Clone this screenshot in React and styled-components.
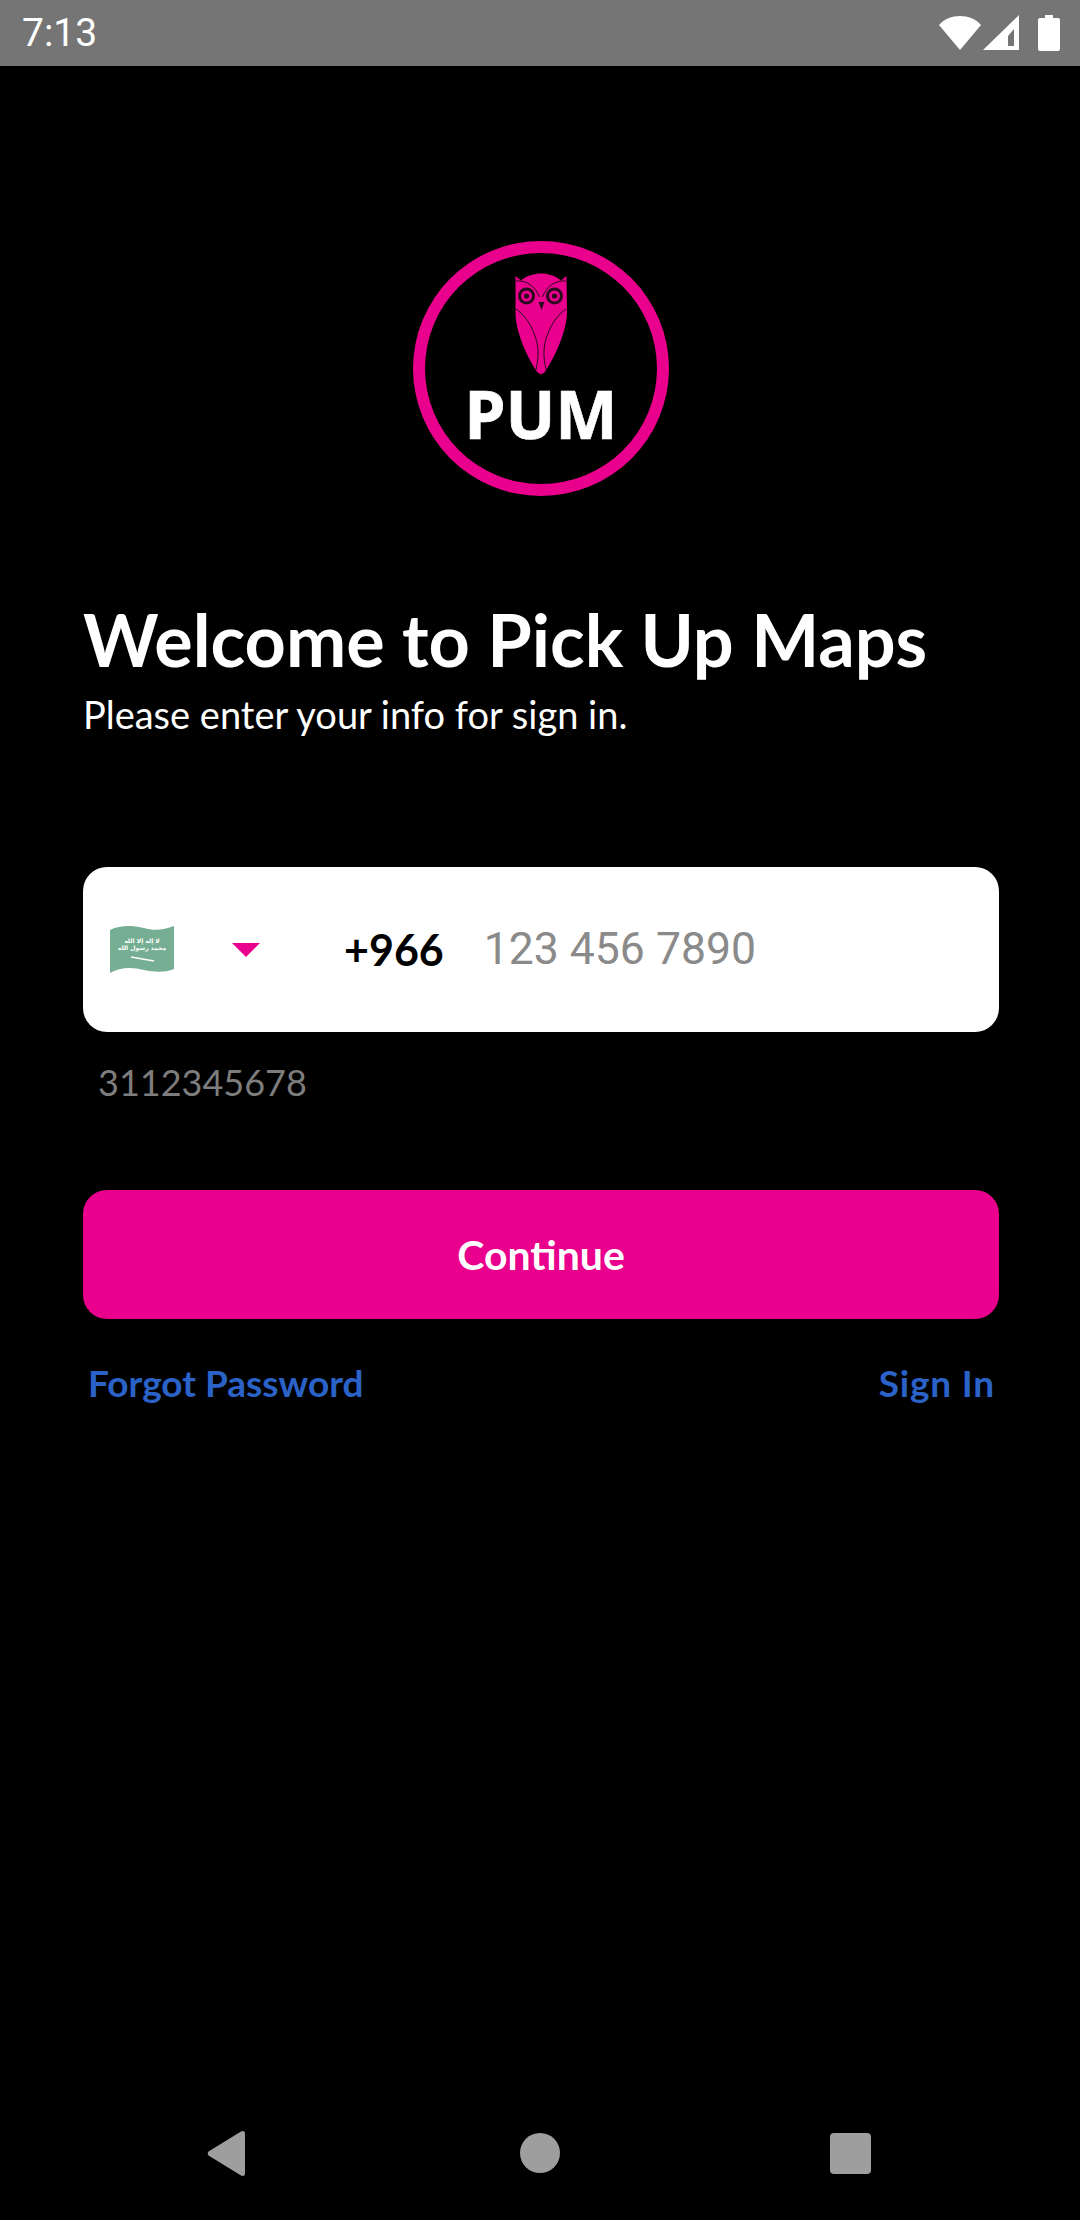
import React from "react";
import styled, { createGlobalStyle } from "styled-components";

const Global = createGlobalStyle`
  html, body { margin: 0; padding: 0; background: #000; }
  * { box-sizing: border-box; }
`;

const UI = `"Lato", "Noto Sans", sans-serif`;

const Screen = styled.div`
  width: 1080px;
  height: 2220px;
  background: #000;
  display: flex;
  flex-direction: column;
  font-family: ${UI};
  overflow: hidden;
`;

const StatusBar = styled.header`
  height: 66px;
  flex: none;
  background: #757575;
  display: flex;
  align-items: center;
  justify-content: space-between;
  padding: 0 20px 0 22px;
`;

const Clock = styled.span`
  font: 400 39px/1 "Roboto", sans-serif;
  color: #fff;
  margin-top: 1px;
`;

const StatusIcons = styled.div`
  display: flex;
  align-items: center;
`;

const SignalIcon = styled.svg`
  width: 38px;
  height: 36px;
  margin-left: 1px;
`;

const BatteryIcon = styled.svg`
  width: 22px;
  height: 36px;
  margin-left: 18px;
`;

const Main = styled.main`
  flex: 1;
  display: flex;
  flex-direction: column;
  padding: 175px 81px 0 83px;
`;

const Logo = styled.div`
  width: 256px;
  height: 255px;
  align-self: center;
  border: 12px solid #e9008c;
  border-radius: 50%;
  display: flex;
  flex-direction: column;
  align-items: center;
  padding-top: 20px;
`;

const LogoMark = styled.span`
  font: 700 66px/1 "Noto Sans", sans-serif;
  color: #fff;
  margin-top: 3px;
  -webkit-text-stroke: 0.6px #fff;
`;

const Title = styled.h1`
  margin: 101px 0 0 0;
  font: 700 72px/84px ${UI};
  letter-spacing: -0.03px;
  color: #fff;
  white-space: nowrap;
`;

const Subtitle = styled.p`
  margin: 10px 0 0 0;
  font: 400 38px/46px ${UI};
  color: #fff;
`;

const PhoneField = styled.div`
  margin-top: 130px;
  height: 165px;
  border-radius: 24px;
  background: #fff;
  display: flex;
  align-items: center;
  padding-left: 27px;
`;

const Caret = styled.span`
  width: 0;
  height: 0;
  margin-left: 58px;
  border-left: 14.5px solid transparent;
  border-right: 14.5px solid transparent;
  border-top: 14px solid #e9008c;
`;

const DialCode = styled.span`
  margin-left: 84px;
  font: 700 43px/1 ${UI};
  color: #000;
`;

const Placeholder = styled.span`
  margin-left: 40px;
  font: 400 44.5px/1 "Roboto", sans-serif;
  color: #8a8a8a;
`;

const HelperNumber = styled.div`
  margin: 27px 0 0 15px;
  font: 400 36px/46px ${UI};
  color: #7d7d7d;
`;

const ContinueButton = styled.button`
  margin-top: 85px;
  height: 129px;
  width: 100%;
  border: 0;
  border-radius: 24px;
  background: #e9008c;
  color: #fff;
  font: 700 41px/1 ${UI};
`;

const LinkRow = styled.div`
  display: flex;
  justify-content: space-between;
  padding: 0 4px 0 5px;
  margin-top: 41px;
`;

const TextLink = styled.a`
  font: 700 37px/46px ${UI};
  letter-spacing: ${(p) => p.$tracking || 0}px;
  color: #2a62c8;
`;

const NavBar = styled.nav`
  height: 132px;
  flex: none;
  display: flex;
  align-items: flex-start;
  padding: 45px 0 0 207px;
`;

const NavBack = styled.svg`
  width: 38px;
  height: 45px;
  margin-top: -2px;
`;

const NavHome = styled.span`
  width: 40px;
  height: 40px;
  margin-left: 275px;
  border-radius: 50%;
  background: #9e9e9e;
`;

const NavRecent = styled.span`
  width: 41px;
  height: 41px;
  margin-left: 270px;
  border-radius: 4px;
  background: #9e9e9e;
`;

const Owl = () => (
  <svg width="54" height="104" viewBox="13 9 54 104" aria-hidden="true">
    <path
      fill="#e9008c"
      d="M14.5 12 L20 16.5 C26 11.5 33 9.5 40 9.5 C47 9.5 54 11.5 60 16.5 L65.5 12 L66 50 C65 70 52 96 44.5 107 C42 111 38 111 35.5 107 C28 96 15 70 14.5 50 Z"
    />
    <g fill="none" stroke="#2a0a1e" strokeWidth="1">
      <path d="M15 17 C24 16 34 21 38.5 33" />
      <path d="M65 17 C56 16 46 21 41.5 33" />
      <path d="M15 45 C26 52 36 70 37 86 C37.5 94 36 100 35 106" />
      <path d="M65 45 C54 52 44 70 43 86 C42.5 94 44 100 45 106" />
      <circle cx="25.5" cy="32" r="7" strokeWidth="3" />
      <circle cx="53.5" cy="32" r="7" strokeWidth="3" />
    </g>
    <circle cx="25.5" cy="32" r="2.6" fill="#2a0a1e" />
    <circle cx="53.5" cy="32" r="2.6" fill="#2a0a1e" />
    <path d="M37.5 38 L43.5 38 L40.5 46 Z" fill="#2a0a1e" />
  </svg>
);

const SaudiFlag = () => (
  <svg width="64" height="47" viewBox="0 0 64 47" aria-hidden="true">
    <path
      fill="#75ae93"
      d="M0 4 C10 -1 22 -1 34 2 C44 5 54 4 64 0 L64 43 C54 47 44 46 34 44 C22 41 10 41 0 47 Z"
    />
    <g fontFamily="DejaVu Sans" fontSize="6" fontWeight="700" fill="#fff" textAnchor="middle">
      <text x="32" y="17">لا إله إلا الله</text>
      <text x="32" y="24">محمد رسول الله</text>
    </g>
    <path d="M21 31 L44 35" stroke="#fff" strokeWidth="1.6" />
  </svg>
);

export default function App() {
  return (
    <Screen>
      <Global />
      <StatusBar>
        <Clock>7:13</Clock>
        <StatusIcons>
          <svg width="42" height="34" viewBox="0 0 42 34">
            <path fill="#fff" d="M21 34 L0 9 C5 3 13 0 21 0 C29 0 37 3 42 9 Z" />
          </svg>
          <SignalIcon viewBox="0 0 38 36">
            <path fill="#fff" fillRule="evenodd" d="M37 0 L37 35 L1 35 Z M32 14 L26 21 L26 31 L32 31 Z" />
          </SignalIcon>
          <BatteryIcon viewBox="0 0 22 36">
            <path fill="#fff" d="M7 0 H15 V3 H20 Q22 3 22 5 V34 Q22 36 20 36 H2 Q0 36 0 34 V5 Q0 3 2 3 H7 Z" />
          </BatteryIcon>
        </StatusIcons>
      </StatusBar>

      <Main>
        <Logo>
          <Owl />
          <LogoMark>PUM</LogoMark>
        </Logo>
        <Title>Welcome to Pick Up Maps</Title>
        <Subtitle>Please enter your info for sign in.</Subtitle>

        <PhoneField>
          <SaudiFlag />
          <Caret />
          <DialCode>+966</DialCode>
          <Placeholder>123 456 7890</Placeholder>
        </PhoneField>
        <HelperNumber>3112345678</HelperNumber>

        <ContinueButton>Continue</ContinueButton>
        <LinkRow>
          <TextLink>Forgot Password</TextLink>
          <TextLink $tracking={0.8}>Sign In</TextLink>
        </LinkRow>
      </Main>

      <NavBar>
        <NavBack viewBox="0 0 38 45">
          <path
            fill="#9e9e9e"
            d="M34 0.5 Q38 -1 38 3 L38 42 Q38 46 34 44.5 L1.5 24.5 Q0 22.5 1.5 20.5 Z"
          />
        </NavBack>
        <NavHome />
        <NavRecent />
      </NavBar>
    </Screen>
  );
}
